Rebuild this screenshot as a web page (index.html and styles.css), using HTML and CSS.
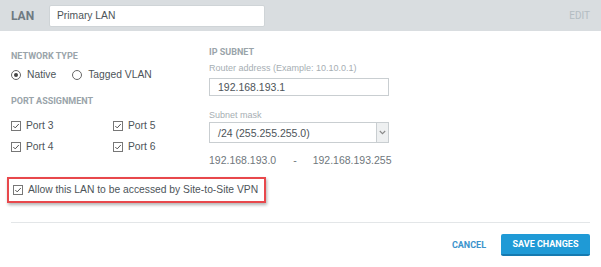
FILE: index.html
```html
<!DOCTYPE html>
<html lang="en">
<head>
    <meta charset="UTF-8">
    <title>LAN</title>
    <link rel="stylesheet" href="styles.css">
</head>
<body>
    <div class="header">
        <span class="header-title">LAN</span>
        <input type="text" class="name-input" value="Primary LAN">
        <span class="edit">EDIT</span>
    </div>
    <div class="content">
        <div class="columns">
            <div class="col-left">
                <div class="section-label first">NETWORK TYPE</div>
                <div class="radio-row">
                    <span class="opt"><span class="radio checked"></span>Native</span>
                    <span class="opt"><span class="radio"></span>Tagged VLAN</span>
                </div>
                <div class="section-label second">PORT ASSIGNMENT</div>
                <div class="ports">
                    <span class="opt"><svg class="check" viewBox="0 0 10 10"><rect x="0.5" y="0.5" width="9" height="9" fill="#fff" stroke="#777"/><path d="M2.3 5 L4.2 6.9 L7.8 3" fill="none" stroke="#555" stroke-width="1"/></svg>Port 3</span>
                    <span class="opt"><svg class="check" viewBox="0 0 10 10"><rect x="0.5" y="0.5" width="9" height="9" fill="#fff" stroke="#777"/><path d="M2.3 5 L4.2 6.9 L7.8 3" fill="none" stroke="#555" stroke-width="1"/></svg>Port 5</span>
                    <span class="opt"><svg class="check" viewBox="0 0 10 10"><rect x="0.5" y="0.5" width="9" height="9" fill="#fff" stroke="#777"/><path d="M2.3 5 L4.2 6.9 L7.8 3" fill="none" stroke="#555" stroke-width="1"/></svg>Port 4</span>
                    <span class="opt"><svg class="check" viewBox="0 0 10 10"><rect x="0.5" y="0.5" width="9" height="9" fill="#fff" stroke="#777"/><path d="M2.3 5 L4.2 6.9 L7.8 3" fill="none" stroke="#555" stroke-width="1"/></svg>Port 6</span>
                </div>
            </div>
            <div class="col-right">
                <div class="section-label">IP SUBNET</div>
                <div class="field-label">Router address (Example: 10.10.0.1)</div>
                <div class="box">192.168.193.1</div>
                <div class="field-label mask">Subnet mask</div>
                <div class="box select">
                    <span>/24 (255.255.255.0)</span>
                    <span class="arrow">
                        <svg width="7" height="5" viewBox="0 0 7 5"><path d="M0.8 1 L3.5 3.7 L6.2 1" fill="none" stroke="#888" stroke-width="1.1"/></svg>
                    </span>
                </div>
                <div class="range">
                    <span>192.168.193.0</span>
                    <span class="dash">-</span>
                    <span>192.168.193.255</span>
                </div>
            </div>
        </div>
        <div class="vpn">
            <span class="opt"><svg class="check" viewBox="0 0 10 10"><rect x="0.5" y="0.5" width="9" height="9" fill="#fff" stroke="#777"/><path d="M2.3 5 L4.2 6.9 L7.8 3" fill="none" stroke="#555" stroke-width="1"/></svg>Allow this LAN to be accessed by Site-to-Site VPN</span>
        </div>
        <div class="footer">
            <span class="cancel">CANCEL</span>
            <button class="save">SAVE CHANGES</button>
        </div>
    </div>
</body>
</html>
```
FILE: styles.css
```css
body {
    margin: 0;
    background: #fff;
    font-family: "Liberation Sans", Arial, sans-serif;
    color: #4d5459;
    font-size: 10.3px;
}
.header {
    background: #d9dde0;
    height: 31px;
    display: flex;
    align-items: center;
    padding: 0 11px;
}
.header-title {
    font-family: Roboto, sans-serif;
    font-weight: bold;
    font-size: 12px;
    color: #6f7a82;
    width: 38px;
}
.name-input {
    width: 200px;
    height: 16px;
    border: 1px solid #cfd4d7;
    border-radius: 2px;
    padding: 2px 7px;
    font-family: "Liberation Sans", Arial, sans-serif;
    font-size: 10.3px;
    color: #4d5459;
    outline: none;
}
.edit {
    margin-left: auto;
    font-family: Roboto, sans-serif;
    font-size: 10px;
    color: #b3bcc2;
}
.content {
    padding: 0 11px;
}
.columns {
    display: flex;
}
.col-left {
    width: 198px;
}
.col-right {
    width: 180px;
    padding-top: 15px;
}
.section-label {
    font-family: Roboto, sans-serif;
    font-weight: bold;
    font-size: 9px;
    line-height: 12px;
    color: #9aa4aa;
}
.section-label.first {
    margin-top: 19px;
}
.section-label.second {
    margin-top: 13px;
}
.radio-row {
    display: flex;
    gap: 16px;
    margin-top: 6px;
    line-height: 14px;
}
.opt {
    display: flex;
    align-items: center;
    line-height: 14px;
}
.radio {
    width: 8px;
    height: 8px;
    border: 1px solid #666;
    border-radius: 50%;
    margin-right: 6px;
    position: relative;
}
.radio.checked::after {
    content: "";
    position: absolute;
    left: 2px;
    top: 2px;
    width: 4px;
    height: 4px;
    border-radius: 50%;
    background: #444;
}
.ports {
    display: grid;
    grid-template-columns: 102px 96px;
    row-gap: 7px;
    margin-top: 12px;
}
.check {
    width: 10px;
    height: 10px;
    margin-right: 5px;
    flex-shrink: 0;
}
.field-label {
    font-size: 9px;
    line-height: 12px;
    color: #a6aeb3;
    margin-top: 4px;
}
.field-label.mask {
    margin-top: 13px;
}
.box {
    margin-top: 4px;
    height: 16px;
    border: 1px solid #c9ced1;
    padding: 0 8px;
    display: flex;
    align-items: center;
    font-size: 10.5px;
}
.select {
    margin-top: 1px;
    justify-content: space-between;
    padding-right: 0;
    height: 19px;
}
.arrow {
    width: 11px;
    height: 19px;
    border-left: 1px solid #c9ced1;
    background: #eef0f1;
    display: flex;
    align-items: center;
    justify-content: center;
}
.range {
    margin-top: 10px;
    line-height: 14px;
    font-size: 10.5px;
    color: #6f777c;
    display: flex;
}
.dash {
    margin: 0 16px 0 17px;
}
.vpn {
    margin-top: 10px;
    margin-left: -4px;
    width: fit-content;
    padding: 4px 6px 4px 4px;
    border: 2px solid #e8484c;
    box-shadow: 1px 2px 3px rgba(0, 0, 0, 0.3);
}
.footer {
    margin-top: 19px;
    border-top: 1px solid #e3e6e8;
    display: flex;
    justify-content: flex-end;
    align-items: center;
    gap: 15px;
    padding-top: 11px;
}
.cancel {
    font-family: Roboto, sans-serif;
    font-weight: bold;
    font-size: 9px;
    color: #3b93cc;
}
.save {
    background: #1f9ad6;
    color: #fff;
    border: none;
    border-bottom: 2px solid #157ab0;
    border-radius: 2px;
    font-family: Roboto, sans-serif;
    font-weight: bold;
    font-size: 9px;
    width: 89px;
    height: 22px;
}
```
